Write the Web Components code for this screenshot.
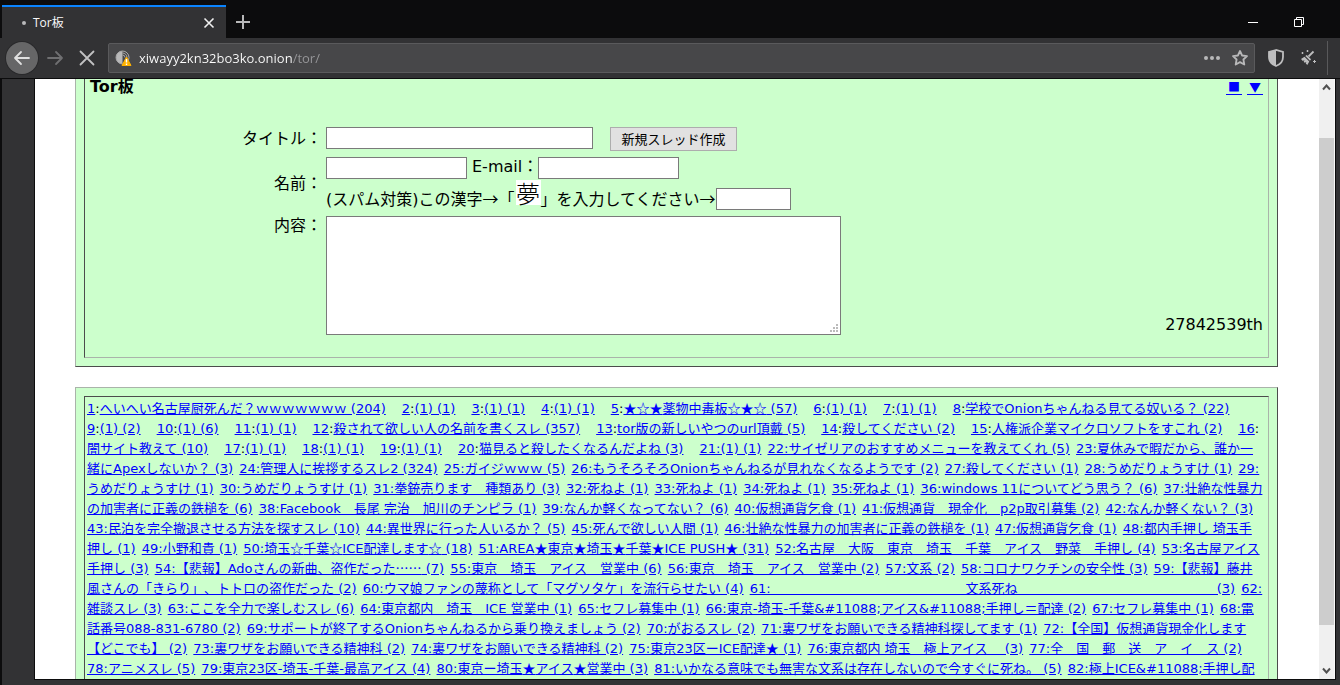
<!DOCTYPE html>
<html lang="ja">
<head>
<meta charset="utf-8">
<meta name="viewport" content="width=device-width, initial-scale=1">
<title>Tor板</title>
<style>
html, body { margin: 0; height: 100%; }
body { overflow: hidden; background: #0c0c0d; font: 16px/20px "DejaVu Sans", "Noto Sans CJK JP", sans-serif; text-spacing-trim: space-all; }
</style>
</head>
<body>
<browser-window>
  <tab-strip slot="chrome" label="Tor板"></tab-strip>
  <nav-bar slot="chrome"></nav-bar>
  <board-panel><thread-form></thread-form></board-panel>
  <board-panel><thread-list></thread-list></board-panel>
</browser-window>

<script>
function define(name, html, setup) {
  const template = document.createElement('template');
  template.innerHTML = html;
  customElements.define(name, class extends HTMLElement {
    constructor() {
      super();
      this.attachShadow({ mode: 'open' }).append(template.content.cloneNode(true));
    }
    connectedCallback() { if (setup) setup(this.shadowRoot, this); }
  });
}

define('tab-strip', `
<style>
:host { display: flex; height: 38px; box-sizing: border-box; padding: 5px 0 0 2px; background: #0c0c0d; color: #f9f9fa; font: 12px/16px "Open Sans", "Noto Sans CJK JP", sans-serif; }
.tab { display: flex; align-items: center; width: 224px; box-sizing: border-box; border-top: 2px solid #0a84ff; background: #323234; padding: 0 8px 0 20px; gap: 7px; }
.dot { width: 4px; height: 4px; border-radius: 2px; background: #b9b9ba; }
.name { flex: 1; }
button { border: 0; padding: 0; background: none; display: flex; align-items: center; justify-content: center; }
.x { width: 18px; height: 18px; }
.new { width: 34px; }
.controls { margin-left: auto; display: flex; padding-right: 18px; }
.controls button { width: 46px; }
</style>
<div class="tab"><span class="dot"></span><span class="name"></span>
<button class="x" aria-label="閉じる"><svg width="12" height="12"><path d="M1.5 1.5l9 9M10.500 1.500l-9 9" stroke="#f0f0f0" stroke-width="1.6"/></svg></button></div>
<button class="new" aria-label="新しいタブ"><svg width="14" height="14"><path d="M7 0v14M0 7h14" stroke="#b8b8b9" stroke-width="2"/></svg></button>
<div class="controls">
<button aria-label="最小化"><svg width="10" height="10"><path d="M0 5.500h10" stroke="#fff"/></svg></button>
<button aria-label="元に戻す"><svg width="10" height="10" fill="none" stroke="#fff"><path d="M.5 2.500h7v7h-7zM2.500 2.500v-2h7v7h-2"/></svg></button>
</div>`, (root, host) => { root.querySelector('.name').textContent = host.getAttribute('label'); });

define('nav-bar', `
<style>
:host { display: flex; align-items: center; height: 41px; box-sizing: border-box; border-bottom: 1px solid #0c0c0d; background: #323234; padding: 0 12px 0 6px; }
button { border: 0; padding: 0; background: none; display: flex; align-items: center; justify-content: center; width: 32px; height: 32px; flex: none; }
.back { background: #666667; border-radius: 50%; box-shadow: 0 0 0 1px #29292b; margin-right: 1px; }
.url { display: flex; align-items: center; flex: 1; height: 30px; box-sizing: border-box; margin: 0 5px; border: 1px solid #5a5a5c; border-radius: 2px; background: #474749; padding-left: 6px; }
input { flex: 1; min-width: 0; height: 28px; box-sizing: border-box; border: 0; padding: 0; margin-left: 7px; outline: 0; font: 13px/20px "Open Sans", sans-serif; color: transparent; background: linear-gradient(90deg, #fff 154px, #97979a 154px) text; }
.url button { width: 28px; height: 28px; }
.sep { width: 1px; height: 34px; background: #59595b; margin-left: 3px; }
</style>
<button class="back" aria-label="戻る"><svg width="18" height="18" fill="none" stroke="#e0e0e0" stroke-width="1.800" stroke-linejoin="round" stroke-linecap="round"><path d="M16 9H2M8 3L2 9l6 6"/></svg></button>
<button aria-label="進む"><svg width="18" height="18" fill="none" stroke="#6f6f71" stroke-width="1.800" stroke-linejoin="round" stroke-linecap="round"><path d="M2 9h14M10 3l6 6-6 6"/></svg></button>
<button aria-label="中止"><svg width="16" height="16"><path d="M1.500 1.500l13 13M14.500 1.500l-13 13" stroke="#c1c1c2" stroke-width="1.800" stroke-linecap="round"/></svg></button>
<div class="url">
<svg width="17" height="17" fill="none"><path d="M7.500 1a6.500 6.500 0 0 0 0 13z" fill="#b8b8b9"/><circle cx="7.500" cy="7.500" r="6.500" stroke="#a8a8a9"/><path d="M7.500 3a4.500 4.500 0 0 1 4.500 4.500M7.500 5a2.500 2.500 0 0 1 2.500 2.500" stroke="#a8a8a9"/><path d="M11.500 7L16 15.500H7z" fill="#ffb100" stroke="#ffb100" stroke-linejoin="round"/><path d="M11.500 9v3.400M11.500 13.600v1.300" stroke="#fff" stroke-width="1.400"/></svg>
<input aria-label="アドレス" value="xiwayy2kn32bo3ko.onion/tor/">
<button aria-label="ページ操作"><svg width="16" height="4" fill="#b8b8b9"><circle cx="2" cy="2" r="2"/><circle cx="8" cy="2" r="2"/><circle cx="14" cy="2" r="2"/></svg></button>
<button aria-label="ブックマーク"><svg width="16" height="16" fill="none" stroke="#b8b8b9" stroke-width="1.800" stroke-linejoin="round"><path d="M8 1l2.100 4.500 4.900.600-3.600 3.400.900 5L8 12.100l-4.300 2.400.900-5L1 6.100l4.900-.600z"/></svg></button>
</div>
<button aria-label="セキュリティレベル"><svg width="16" height="18"><path d="M8 1L1 3v5c0 4.500 3 7.500 7 9 4-1.500 7-4.500 7-9V3z" fill="none" stroke="#bebebf" stroke-width="1.800"/><path d="M8 1L1 3v5c0 4.500 3 7.500 7 9z" fill="#bebebf"/></svg></button>
<button aria-label="新しい識別子"><svg width="18" height="18"><path d="M14.500 2.500l-5 5" stroke="#bebebf" stroke-width="1.800"/><path d="M7.800 6l4.200 4.200-1 1.500-4.700-4.700zM5.500 7.700l4.800 4.800-2 3.500-1.500-1.500.5-1.600-1.600.8-1-1 .8-1.600-1.700.8L2 10z" fill="#bebebf"/><path d="M3.500 3v2M2.500 4h2M8.500 1v2M7.500 2h2M15.500 11v3M14 12.500h3" stroke="#bebebf"/></svg></button>
<span class="sep"></span>`);

define('page-scrollbar', `
<style>
:host { display: flex; flex-direction: column; width: 15px; background: #f0f0f0; border-right: 1px solid #f8f8f8; box-sizing: content-box; }
button { border: 0; padding: 0; background: none; height: 17px; display: flex; align-items: center; justify-content: center; }
.track { flex: 1; display: flex; flex-direction: column; }
.before { flex: 42; } .thumb { flex: 487; background: #cdcdcd; } .after { flex: 37; }
svg { fill: none; stroke: #505050; stroke-width: 2; }
</style>
<button aria-label="上へ"><svg width="9" height="7"><path d="M1 5.500l3.500-4 3.500 4"/></svg></button>
<div class="track"><div class="before"></div><div class="thumb"></div><div class="after"></div></div>
<button aria-label="下へ"><svg width="9" height="7"><path d="M1 1.500l3.500 4 3.500-4"/></svg></button>`);

define('browser-window', `
<style>
:host { display: flex; flex-direction: column; height: 100vh; }
.frame { flex: 1; min-height: 0; display: flex; background: #323234; border-left: 2px solid #0c0c0d; padding: 0 4px 5px 32px; }
.view { flex: 1; min-width: 0; display: flex; background: #fff; border: solid #0c0c0d; border-width: 0 1px 1px; }
main { flex: 1; min-width: 0; overflow: hidden; display: flex; flex-direction: column; gap: 20px; padding: 0 41px 0 40px; }
::slotted(board-panel) { flex: none; }
::slotted(board-panel:first-of-type) { --top: 0px; --top-pad: 0px; }
</style>
<header><slot name="chrome"></slot></header>
<div class="frame"><div class="view"><main><slot></slot></main><page-scrollbar></page-scrollbar></div></div>`);

/* Double frame: raised outer line, sunken inner line. */
define('board-panel', `
<style>
:host { display: block; background: #cfc; border: 1px solid; border-color: #aab3aa #4c4c4c #4c4c4c #aab3aa; border-top-width: var(--top, 1px); padding: var(--top-pad, 8px) 8px 8px; }
.in { border: 1px solid; border-color: #4c4c4c #aab3aa #aab3aa #4c4c4c; border-top-width: var(--top, 1px); }
</style>
<div class="in"><slot></slot></div>`);

define('thread-form', `
<style>
:host { display: block; padding: 0 5px 22px; }
.head { display: flex; justify-content: space-between; align-items: flex-start; height: 48px; }
h1 { margin: 0; font-size: 16px; line-height: 16px; }
.jump { display: flex; gap: 5px; font: 12px/15px "Noto Sans CJK JP", sans-serif; }
a { width: 16px; border-bottom: 1px solid #00f; color: #00f; text-decoration: none; text-align: center; }
form { display: grid; grid-template-columns: 232px 1fr auto; column-gap: 4px; row-gap: 6px; }
.label { text-align: right; align-self: center; }
.label.top { align-self: start; }
.field { display: flex; align-items: flex-start; }
input, textarea { box-sizing: border-box; border: 1px solid #7a7a7a; background: #fff; padding: 1px; margin: 0; font: inherit; height: 22px; outline: 0; }
.title { width: 267px; }
.short { width: 141px; }
.answer { width: 75px; }
button { margin: 0 0 0 17px; width: 127px; height: 24px; padding: 0; border: 1px solid #adadad; background: #e1e1e1; font: 13px/20px "Noto Sans CJK JP", sans-serif; color: #000; }
.mail { margin: 0 0 0 5px; }
.spam { display: flex; align-items: flex-end; height: 31px; }
.kanji { width: 25px; height: 25px; margin: 0 0 5px 1px; background: #fff; font: 300 24px/25px "Noto Sans CJK JP", sans-serif; text-align: center; }
.wide { font-family: "Noto Sans CJK JP", sans-serif; line-height: 0; }
.area { position: relative; width: 515px; height: 119px; }
textarea { display: block; width: 100%; height: 100%; resize: none; }
.grip { position: absolute; right: 3px; bottom: 3px; }
.count { align-self: end; }
.span2 { grid-column: span 2; }
</style>
<div class="head"><h1>Tor板</h1><nav class="jump"><a href="#list">■</a><a href="#next">▼</a></nav></div>
<form onsubmit="return false">
<label class="label" for="t">タイトル：</label>
<div class="field span2"><input id="t" class="title"><button>新規スレッド作成</button></div>
<label class="label" for="n">名前：</label>
<div class="span2">
<div class="field"><input id="n" class="short"><label class="mail" for="m">E-mail：</label><input id="m" class="short"></div>
<div class="spam"><label for="k">(スパム対策)この漢字<span class="wide">→</span>「</label><span class="kanji">夢</span><label for="k">」を入力してください<span class="wide">→</span></label><input id="k" class="answer"></div>
</div>
<label class="label top" for="c">内容：</label>
<div class="area"><textarea id="c"></textarea><svg class="grip" width="8" height="8" fill="#bbb"><path d="M6 0h2v2H6zM6 3h2v2H6zM6 6h2v2H6zM3 3h2v2H3zM3 6h2v2H3zM0 6h2v2H0z"/></svg></div>
<span class="count">27842539th</span>
</form>`);

/* One thread per entry, numbered from 1; "|" is a line end inside or after a title. */
const threads = [
'へいへい名古屋厨死んだ？ｗｗｗｗｗｗｗ (204)', '(1) (1)', '(1) (1)', '(1) (1)', '★☆★薬物中毒板☆★☆ (57)', '(1) (1)', '(1) (1)', '学校でOnionちゃんねる見てる奴いる？ (22)|',
'(1) (2)', '(1) (6)', '(1) (1)', '殺されて欲しい人の名前を書くスレ (357)', 'tor版の新しいやつのurl頂戴 (5)', '殺してください (2)', '人権派企業マイクロソフトをすこれ (2)',
'|闇サイト教えて (10)', '(1) (1)', '(1) (1)', '(1) (1)', '猫見ると殺したくなるんだよね (3)', '(1) (1)', 'サイゼリアのおすすめメニューを教えてくれ (5)',
'夏休みで暇だから、誰か一|緒にApexしないか？ (3)', '管理人に挨拶するスレ2 (324)', 'ガイジｗｗｗ (5)', 'もうそろそろOnionちゃんねるが見れなくなるようです (2)', '殺してください (1)', 'うめだりょうすけ (1)',
'|うめだりょうすけ (1)', 'うめだりょうすけ (1)', '拳銃売ります　種類あり (3)', '死ねよ (1)', '死ねよ (1)', '死ねよ (1)', '死ねよ (1)', 'windows 11についてどう思う？ (6)', '壮絶な性暴力|の加害者に正義の鉄槌を (6)',
'Facebook　長尾 完治　旭川のチンピラ (1)', 'なんか軽くなってない？ (6)', '仮想通貨乞食 (1)', '仮想通貨　現金化　p2p取引募集 (2)', 'なんか軽くない？ (3)|',
'民泊を完全撤退させる方法を探すスレ (10)', '異世界に行った人いるか？ (5)', '死んで欲しい人間 (1)', '壮絶な性暴力の加害者に正義の鉄槌を (1)', '仮想通貨乞食 (1)', '都内手押し 埼玉手|押し (1)',
'小野和貴 (1)', '埼玉☆千葉☆ICE配達します☆ (18)', 'AREA★東京★埼玉★千葉★ICE PUSH★ (31)', '名古屋　大阪　東京　埼玉　千葉　アイス　野菜　手押し (4)', '名古屋アイス|手押し (3)',
'【悲報】Adoさんの新曲、盗作だった…… (7)', '東京　埼玉　アイス　営業中 (6)', '東京　埼玉　アイス　営業中 (2)', '文系 (2)', 'コロナワクチンの安全性 (3)', '【悲報】藤井|風さんの「きらり」、トトロの盗作だった (2)',
'ウマ娘ファンの蔑称として「マグソタケ」を流行らせたい (4)', '　　　　　　　　　　　　　　　文系死ね　　　　　　　　　　　　　　　 (3)', '|雑談スレ (3)', 'ここを全力で楽しむスレ (6)', '東京都内　埼玉　ICE 営業中 (1)', 'セフレ募集中 (1)',
'東京-埼玉-千葉&#11088;アイス&#11088;手押し＝配達 (2)', 'セフレ募集中 (1)', '電|話番号088-831-6780 (2)', 'サポートが終了するOnionちゃんねるから乗り換えましょう (2)', 'がおるスレ (2)', '裏ワザをお願いできる精神科探してます (1)',
'【全国】仮想通貨現金化します|【どこでも】 (2)', '裏ワザをお願いできる精神科 (2)', '裏ワザをお願いできる精神科 (2)', '東京23区ーICE配達★ (1)', '東京都内 埼玉　極上アイス　 (3)', '全　国　郵　送　ア　イ　ス (2)|',
'アニメスレ (5)', '東京23区-埼玉-千葉-最高アイス (4)', '東京ー埼玉★アイス★営業中 (3)', 'いかなる意味でも無害な文系は存在しないので今すぐに死ね。 (5)', '極上ICE&#11088;手押し配|'
];

define('thread-list', `
<style>
:host { display: block; padding: 2px; font-size: 13px; line-height: 20px; }
p { margin: 0; white-space: nowrap; }
a { color: #00f; }
.thread { margin-right: 2px; }
.thread.spaced { margin-right: 3px; }
.wide { font-family: "Noto Sans CJK JP", sans-serif; line-height: 0; }
</style>
<p></p>`, root => {
  const mark = s => s.replace(/&/g, '&amp;').replace(/[★☆…]+/g, '<span class="wide">$&</span>').replace(/\|/g, '<br>');
  root.querySelector('p').innerHTML = threads.map((t, i) => {
    const n = i + 1, ends = t.endsWith('|');
    const title = mark(ends ? t.slice(0, -1) : t);
    const link = n <= 20
      ? `<a href="#r${n}">${n}</a>:${title.startsWith('<br>') ? '<br>' : ''}<a class="thread spaced" href="#t${n}">${title.replace(/^<br>/, '')}</a>`
      : `<a class="thread" href="#t${n}">${n}:${title}</a>`;
    return link + (ends ? '<br>' : n <= 20 ? '　' : ' ');
  }).join('');
});
</script>
</body>
</html>
